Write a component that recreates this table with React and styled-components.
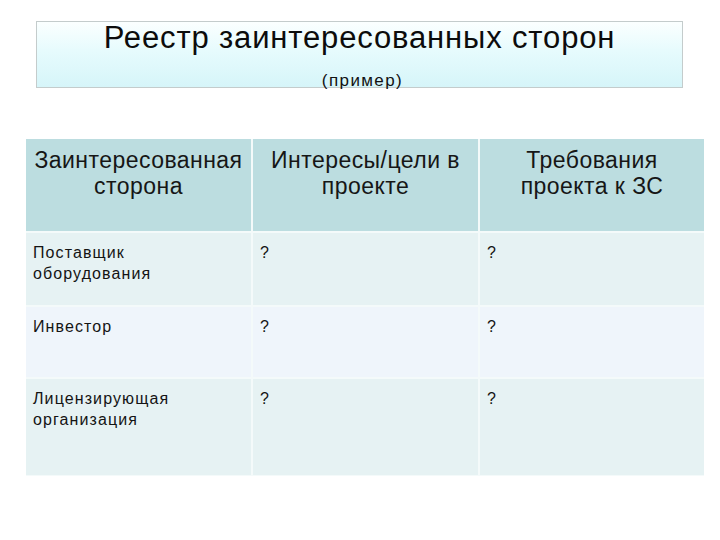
import React from 'react'
import styled, { createGlobalStyle } from 'styled-components'

const GlobalStyle = createGlobalStyle`
  body {
    margin: 0;
    background: #ffffff;
    font-family: "Liberation Sans", Arial, sans-serif;
    color: #111;
  }
`

const Slide = styled.div`
  width: 720px;
  height: 540px;
  box-sizing: border-box;
  padding: 21px 16px 0 26px;
  display: flex;
  flex-direction: column;
`

const TitleBox = styled.div`
  margin: 0 21px 0 10px;
  height: 67px;
  box-sizing: border-box;
  border: 1px solid #c4cccc;
  background: linear-gradient(to bottom, #fbffff 0%, #e6fbfd 45%, #d6f5f9 100%);
  display: flex;
  flex-direction: column;
  align-items: center;
`

const Title = styled.h1`
  margin: 0;
  font-weight: normal;
  font-size: 31px;
  line-height: 32px;
  letter-spacing: 0.85px;
  color: #0c0c0c;
`

const Subtitle = styled.div`
  margin-top: 17px;
  font-size: 17px;
  line-height: 20px;
  letter-spacing: 1.4px;
  padding-left: 6px;
`

const Table = styled.div`
  margin-top: 51px;
  width: 678px;
  display: grid;
  grid-template-columns: 225px 225px 224px;
  grid-template-rows: 92px 72px 70px 96px;
  gap: 2px;
  background: #f4fafa;
  padding-bottom: 1px;
`

const HeadCell = styled.div`
  background: #bcdde0;
  text-align: center;
  font-size: 23px;
  line-height: 26px;
  letter-spacing: 0.45px;
  padding-top: 8px;
  color: #161616;
`

const Cell = styled.div`
  background: ${p => (p.$alt ? '#eff5fb' : '#e6f2f3')};
  font-size: 16px;
  line-height: 21px;
  letter-spacing: 1.1px;
  padding: 9px 6px 0 7px;
  color: #141414;
`

const rows = [
  ['Поставщик\nоборудования', '?', '?'],
  ['Инвестор', '?', '?'],
  ['Лицензирующая\nорганизация', '?', '?'],
]

const Lines = ({ text }) =>
  text.split('\n').map((t, i) => <div key={i}>{t}</div>)

export default function App() {
  return (
    <>
      <GlobalStyle />
      <Slide>
        <TitleBox>
          <Title>Реестр заинтересованных сторон</Title>
          <Subtitle>(пример)</Subtitle>
        </TitleBox>
        <Table>
          <HeadCell><Lines text={'Заинтересованная\nсторона'} /></HeadCell>
          <HeadCell><Lines text={'Интересы/цели в\nпроекте'} /></HeadCell>
          <HeadCell><Lines text={'Требования\nпроекта к  ЗС'} /></HeadCell>
          {rows.map((r, i) =>
            r.map((c, j) => (
              <Cell key={i + '-' + j} $alt={i === 1}>
                <Lines text={c} />
              </Cell>
            ))
          )}
        </Table>
      </Slide>
    </>
  )
}
